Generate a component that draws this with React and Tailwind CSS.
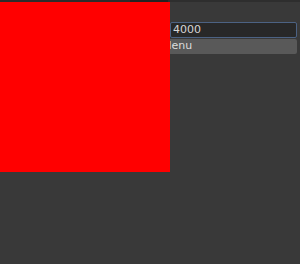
import React from 'react';

function App() {
  return (
    <div className="relative w-[300px] h-[264px] bg-[#393939] overflow-hidden font-['DejaVu_Sans',sans-serif] text-[11px] text-[#d6d6d6]">
      {/* top strip */}
      <div className="flex h-[2px]">
        <div className="w-[130px] bg-[#2c2c2c]" />
        <div className="w-[38px] bg-[#232323]" />
        <div className="flex-1 bg-[#2e2e2e]" />
      </div>

      {/* side controls */}
      <div className="flex flex-col gap-[1px] pt-[20px] pl-[160px] pr-[3px]">
        <div className="ml-[10px] h-[16px] flex items-center border border-[#4c6283] rounded-[2px] bg-[#282828] px-[2px]">
          4000
        </div>
        <button className="h-[15px] flex items-center bg-[#595959] rounded-[2px] pl-[2px] text-left text-[#dcdcdc]">
          Menu
        </button>
      </div>

      {/* canvas */}
      <div className="absolute left-0 top-[2px] w-[170px] h-[170px] bg-[#ff0000]" />
    </div>
  );
}

export default App;
